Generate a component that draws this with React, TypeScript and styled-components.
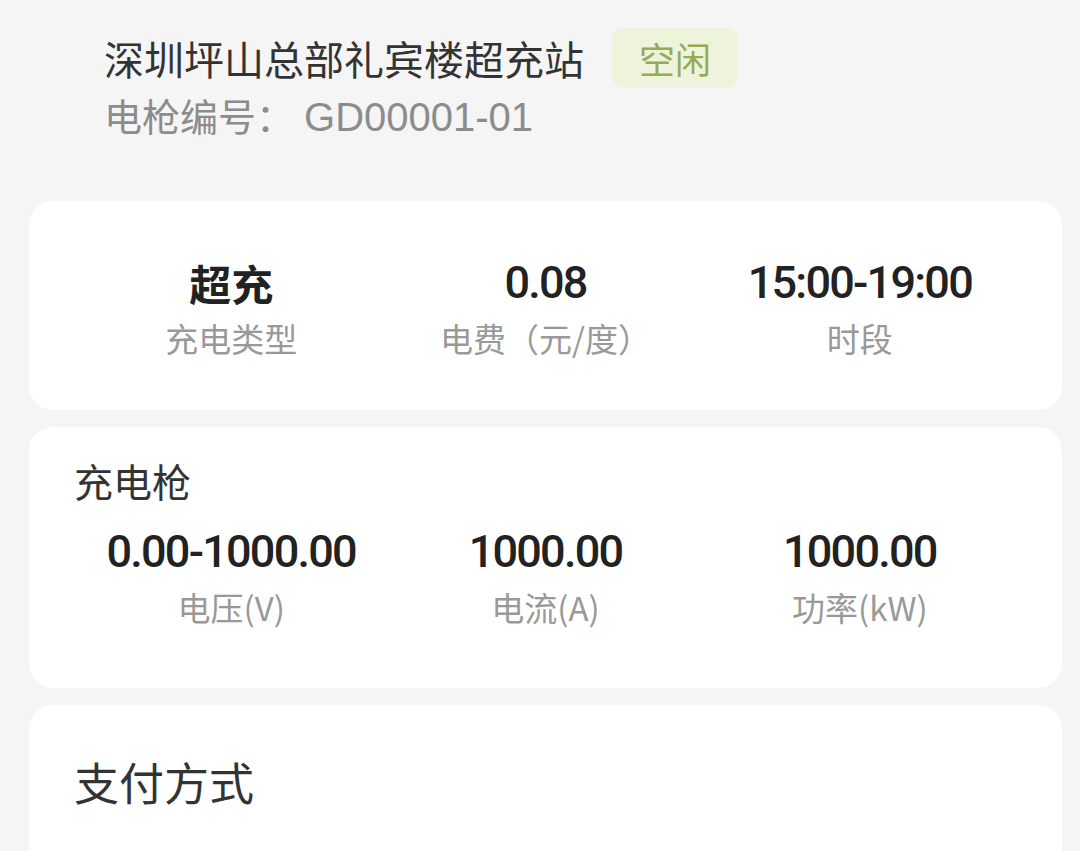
import { createGlobalStyle, styled } from "styled-components";

const GlobalStyle = createGlobalStyle`
  html, body {
    margin: 0;
    padding: 0;
    background: #f5f5f5;
    font-family: "Noto Sans CJK SC", "Noto Sans", sans-serif;
  }
`;

const specs = [
  { value: "超充", label: "充电类型", cjk: true },
  { value: "0.08", label: "电费（元/度）" },
  { value: "15:00-19:00", label: "时段" },
];

const gunSpecs = [
  { value: "0.00-1000.00", label: "电压(V)" },
  { value: "1000.00", label: "电流(A)" },
  { value: "1000.00", label: "功率(kW)" },
];

const App = () => {
  return (
    <>
      <GlobalStyle />
      <Page>
        <Header>
          <TitleRow>
            <StationName>深圳坪山总部礼宾楼超充站</StationName>
            <StatusBadge>空闲</StatusBadge>
          </TitleRow>
          <GunNumber>
            电枪编号：<Latin>GD00001-01</Latin>
          </GunNumber>
        </Header>

        <Card $top={56} $bottom={52}>
          <StatGrid>
            {specs.map((s) => (
              <Stat key={s.label}>
                <StatValue $cjk={s.cjk}>{s.value}</StatValue>
                <StatLabel>{s.label}</StatLabel>
              </Stat>
            ))}
          </StatGrid>
        </Card>

        <Card $top={29} $bottom={61}>
          <SectionTitle>充电枪</SectionTitle>
          <StatGrid $gap={22}>
            {gunSpecs.map((s) => (
              <Stat key={s.label}>
                <StatValue>{s.value}</StatValue>
                <StatLabel>{s.label}</StatLabel>
              </Stat>
            ))}
          </StatGrid>
        </Card>

        <Card $top={49} $bottom={80}>
          <PayTitle>支付方式</PayTitle>
        </Card>
      </Page>
    </>
  );
};

export default App;

const Page = styled.div`
  display: flex;
  flex-direction: column;
  gap: 17px;
  padding: 0 18px 0 29px;
`;

const Header = styled.div`
  padding: 28px 0 40px 75px;
`;

const TitleRow = styled.div`
  display: flex;
  align-items: center;
  gap: 28px;
`;

const StationName = styled.div`
  font-size: 40px;
  line-height: 58px;
  color: #333;
`;

const StatusBadge = styled.span`
  display: inline-flex;
  align-items: center;
  justify-content: center;
  width: 126px;
  height: 60px;
  border-radius: 12px;
  background: #eef4dc;
  color: #97aa55;
  font-size: 36px;
`;

const GunNumber = styled.div`
  font-size: 38px;
  line-height: 54px;
  color: #8c8c8c;
`;

const Latin = styled.span`
  margin-left: 10px;
  font-family: "Liberation Sans", "Noto Sans CJK SC", sans-serif;
  font-size: 40px;
`;

const Card = styled.div<{ $top: number; $bottom: number }>`
  background: #fff;
  border-radius: 24px;
  padding: ${(p) => p.$top}px 45px ${(p) => p.$bottom}px;
`;

const StatGrid = styled.div<{ $gap?: number }>`
  display: grid;
  grid-template-columns: repeat(3, 1fr);
  margin-top: ${(p) => p.$gap ?? 0}px;
`;

const Stat = styled.div`
  display: flex;
  flex-direction: column;
  align-items: center;
  gap: 9px;
`;

const StatValue = styled.div<{ $cjk?: boolean }>`
  font-family: ${(p) =>
    p.$cjk
      ? `"Noto Sans CJK SC", sans-serif`
      : `Roboto, "Liberation Sans", sans-serif`};
  font-size: ${(p) => (p.$cjk ? 42 : 45)}px;
  font-weight: ${(p) => (p.$cjk ? 700 : 500)};
  letter-spacing: ${(p) => (p.$cjk ? 0 : -1.75)}px;
  line-height: 52px;
  color: #222;
`;

const StatLabel = styled.div`
  font-size: 33px;
  line-height: 40px;
  color: #999;
`;

const SectionTitle = styled.div`
  font-size: 39px;
  line-height: 48px;
  color: #333;
`;

const PayTitle = styled.div`
  font-size: 45px;
  line-height: 56px;
  color: #333;
`;
